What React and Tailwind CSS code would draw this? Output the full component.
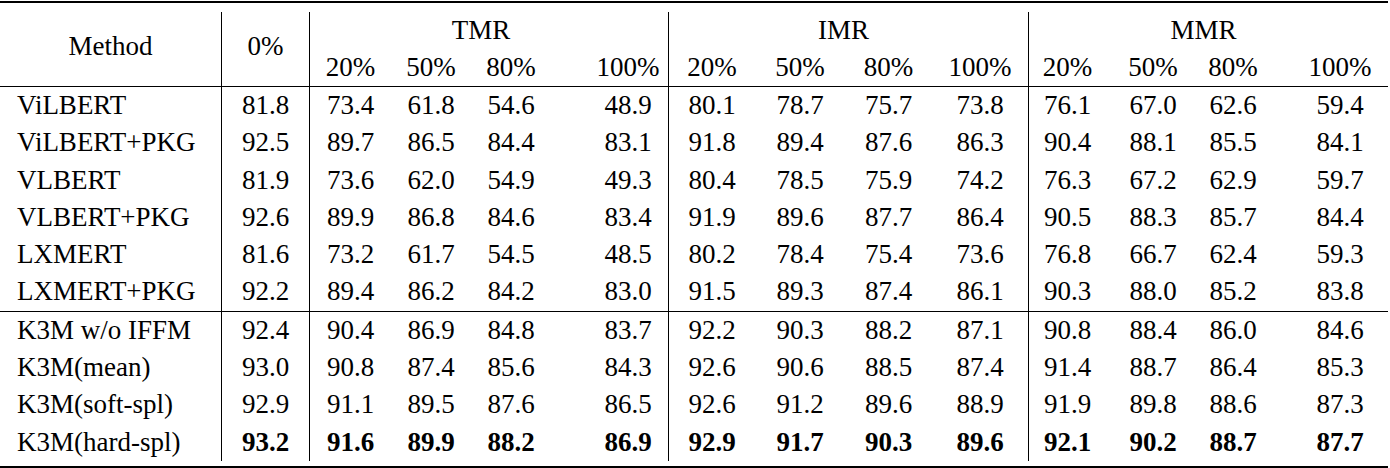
import React from "react";

const GRID =
  "grid grid-cols-[221px_88px_82px_80px_80px_117px_87px_90px_87px_96px_78px_94px_66px_122px]";

const CELL = [
  "pl-[17px] text-left whitespace-nowrap",
  "border-l border-black text-center",
  "border-l border-black text-center",
  "text-center",
  "text-center",
  "text-center pl-[37px]",
  "border-l border-black text-center",
  "text-center",
  "text-center",
  "text-center",
  "border-l border-black text-center",
  "text-center",
  "text-center",
  "text-center pl-[26px]",
];

const groupA = [
  ["ViLBERT", "81.8", "73.4", "61.8", "54.6", "48.9", "80.1", "78.7", "75.7", "73.8", "76.1", "67.0", "62.6", "59.4"],
  ["ViLBERT+PKG", "92.5", "89.7", "86.5", "84.4", "83.1", "91.8", "89.4", "87.6", "86.3", "90.4", "88.1", "85.5", "84.1"],
  ["VLBERT", "81.9", "73.6", "62.0", "54.9", "49.3", "80.4", "78.5", "75.9", "74.2", "76.3", "67.2", "62.9", "59.7"],
  ["VLBERT+PKG", "92.6", "89.9", "86.8", "84.6", "83.4", "91.9", "89.6", "87.7", "86.4", "90.5", "88.3", "85.7", "84.4"],
  ["LXMERT", "81.6", "73.2", "61.7", "54.5", "48.5", "80.2", "78.4", "75.4", "73.6", "76.8", "66.7", "62.4", "59.3"],
  ["LXMERT+PKG", "92.2", "89.4", "86.2", "84.2", "83.0", "91.5", "89.3", "87.4", "86.1", "90.3", "88.0", "85.2", "83.8"],
];

const groupB = [
  ["K3M w/o IFFM", "92.4", "90.4", "86.9", "84.8", "83.7", "92.2", "90.3", "88.2", "87.1", "90.8", "88.4", "86.0", "84.6"],
  ["K3M(mean)", "93.0", "90.8", "87.4", "85.6", "84.3", "92.6", "90.6", "88.5", "87.4", "91.4", "88.7", "86.4", "85.3"],
  ["K3M(soft-spl)", "92.9", "91.1", "89.5", "87.6", "86.5", "92.6", "91.2", "89.6", "88.9", "91.9", "89.8", "88.6", "87.3"],
  ["K3M(hard-spl)", "93.2", "91.6", "89.9", "88.2", "86.9", "92.9", "91.7", "90.3", "89.6", "92.1", "90.2", "88.7", "87.7"],
];

function Row({ cells, bold }) {
  return (
    <div className={`${GRID} h-[37.3px] leading-[37px]`}>
      {cells.map((c, i) => (
        <div key={i} className={`${CELL[i]} ${bold && i > 0 ? "font-bold" : ""}`}>
          {c}
        </div>
      ))}
    </div>
  );
}

const pct = ["20%", "50%", "80%", "100%"];

export default function App() {
  return (
    <div className="w-[1390px] h-[468px] bg-white text-black text-[27px] overflow-hidden font-['Liberation_Serif']">
      <div className="w-[1388px]">
        <div className="mt-[1px] h-[2px] bg-black" />
        <div className="h-[9px]" />
        <div className={`${GRID} grid-rows-[37px_37px] leading-[37px]`}>
          <div className="row-span-2 flex items-center justify-center pb-[6px]">Method</div>
          <div className="row-span-2 border-l border-black flex items-center justify-center pb-[6px]">0%</div>
          <div className="col-span-4 border-l border-black text-center pr-[16px]">TMR</div>
          <div className="col-span-4 border-l border-black text-center pr-[10px]">IMR</div>
          <div className="col-span-4 border-l border-black text-center pr-[10px]">MMR</div>
          {pct.map((p, i) => (
            <div key={"t" + i} className={CELL[2 + i]}>{p}</div>
          ))}
          {pct.map((p, i) => (
            <div key={"i" + i} className={CELL[6 + i]}>{p}</div>
          ))}
          {pct.map((p, i) => (
            <div key={"m" + i} className={CELL[10 + i]}>{p}</div>
          ))}
        </div>
        <div className="h-[1px] bg-black" />
        {groupA.map((r, i) => (
          <Row key={"a" + i} cells={r} />
        ))}
        <div className="h-[1px] bg-black" />
        {groupB.map((r, i) => (
          <Row key={"b" + i} cells={r} bold={i === 3} />
        ))}
        <div className="h-[5px]" />
        <div className="h-[2px] bg-black" />
      </div>
    </div>
  );
}
